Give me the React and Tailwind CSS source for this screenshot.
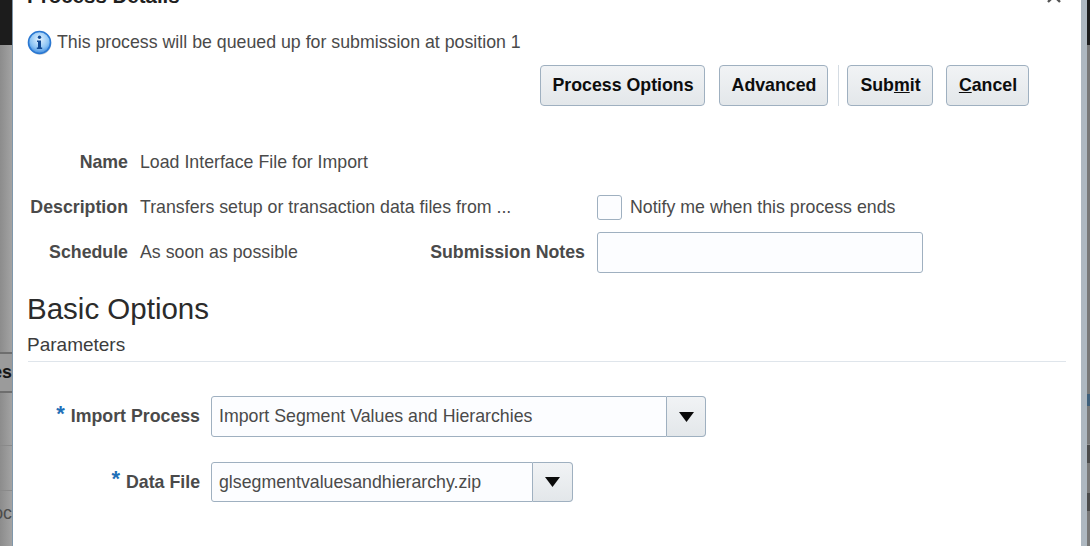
const Btn = ({ className = '', children }) => (
  <button
    type="button"
    className={`h-[41px] rounded-[4px] border border-[#9fb0c0] bg-gradient-to-b from-[#f1f3f5] to-[#e3e7ea] pl-px text-[17.75px] font-bold text-[#0d0d0d] ${className}`}
  >
    {children}
  </button>
);

const DropBtn = ({ className = 'h-[41px] w-[40px]' }) => (
  <button
    type="button"
    className={`flex items-center justify-center rounded-r-[4px] border border-l-0 border-[#9fb0c0] bg-gradient-to-b from-[#f1f3f5] to-[#e3e7ea] ${className}`}
  >
    <svg width="15" height="10" viewBox="0 0 15 10">
      <path d="M0 0h15L7.5 10z" fill="#0a0a0a" />
    </svg>
  </button>
);

const InfoIcon = () => (
  <svg width="25" height="25" viewBox="0 0 25 25" className="-ml-px">
    <defs>
      <radialGradient id="infoFill" cx="50%" cy="35%" r="65%">
        <stop offset="0%" stopColor="#e4f3ff" />
        <stop offset="65%" stopColor="#8cc4f4" />
        <stop offset="100%" stopColor="#3f8ade" />
      </radialGradient>
    </defs>
    <circle cx="13" cy="13.5" r="11.2" fill="#c4ccd4" />
    <circle cx="12.5" cy="12.5" r="11" fill="url(#infoFill)" stroke="#2a78d2" strokeWidth="1.6" />
    <circle cx="12.5" cy="7.2" r="1.7" fill="#114a94" />
    <path d="M10 10.5h4v7h1.2v1.5H9.8v-1.5H11v-5.5h-1z" fill="#114a94" />
  </svg>
);

const Label = ({ children }) => (
  <span className="whitespace-nowrap text-right text-[17.75px] font-bold text-[#4a4a4a]">{children}</span>
);

const Value = ({ className = '', children }) => (
  <span className={`whitespace-nowrap text-[17.75px] text-[#4a4a4a] ${className}`}>{children}</span>
);

function LeftStrip() {
  return (
    <div className="flex w-[12px] shrink-0 flex-col overflow-hidden bg-gradient-to-r from-[#8c8c8c] to-[#a3a3a3]">
      <div className="h-[45px] shrink-0 bg-[#1c1c1c]" />
      <div className="h-[307px] shrink-0" />
      <div className="flex h-[41px] shrink-0 items-center justify-end border-y-2 border-[#6e6e6e] bg-[#9b9b9b] text-[17.75px] font-bold text-[#161616]">
        es
      </div>
      <div className="h-[53px] shrink-0 border-b border-[#8a8a8a]" />
      <div className="h-[45px] shrink-0 border-b border-[#8a8a8a]" />
      <div className="flex h-[44px] shrink-0 items-center justify-end whitespace-nowrap text-[17.75px] text-[#4c4c4c]">
        oc
      </div>
    </div>
  );
}

function RightStrip() {
  return (
    <div className="flex w-[3px] shrink-0 flex-col bg-[#777777]">
      <div className="h-[45px] shrink-0 bg-[#1c1c1c]" />
      <div className="h-[349px] shrink-0" />
      <div className="h-[12px] shrink-0 bg-[#3f5f7a]" />
      <div className="h-[39px] shrink-0 border-b border-[#8a8a8a]" />
      <div className="h-[18px] shrink-0 bg-[#4a4a4a]" />
      <div className="h-[30px] shrink-0" />
      <div className="h-[18px] shrink-0 bg-[#4a4a4a]" />
    </div>
  );
}

export default function App() {
  return (
    <div className="flex h-[546px] w-[1090px] overflow-hidden bg-white font-['Liberation_Sans',Arial,sans-serif]">
      <LeftStrip />
      <div className="flex h-full w-[1075px] shrink-0 border-x border-[#7f97ab] border-r-[6px] border-r-[#aeb8c1]">
        <div className="flex min-w-0 flex-1 flex-col overflow-hidden bg-white pl-[15px] pr-[15px]">
          <div className="-mt-[15px] flex h-[22px] shrink-0 items-center justify-between">
            <span className="-ml-px text-[20.5px] font-bold text-[#1f1f1f]">Process Details</span>
            <svg width="20" height="20" viewBox="0 0 20 20" className="mr-[2px]">
              <path d="M4 4l12 12M16 4L4 16" stroke="#555555" strokeWidth="2.4" />
            </svg>
          </div>

          <div className="mt-[22px] flex h-[26px] shrink-0 items-center gap-[5px]">
            <InfoIcon />
            <Value>This process will be queued up for submission at position 1</Value>
          </div>

          <div className="mt-[10px] flex h-[41px] shrink-0 items-start pl-[512px]">
            <Btn className="w-[165px]">Process Options</Btn>
            <Btn className="ml-[14px] w-[109px]">Advanced</Btn>
            <div className="ml-[10px] h-[41px] w-px bg-[#d5dce3]" />
            <Btn className="ml-[8px] w-[86px]">
              Sub<u>m</u>it
            </Btn>
            <Btn className="ml-[13px] w-[83px]">
              <u>C</u>ancel
            </Btn>
          </div>

          <div className="mt-[34px] grid shrink-0 grid-cols-[100px_273px_160px_auto] grid-rows-[45px_45px_45px] items-center gap-x-[12px]">
            <Label>Name</Label>
            <Value>Load Interface File for Import</Value>
            <span />
            <span />

            <Label>Description</Label>
            <Value className="col-span-2">Transfers setup or transaction data files from ...</Value>
            <div className="flex items-center gap-[8px]">
              <span className="h-[25px] w-[25px] rounded-[3px] border border-[#9fb0c0] bg-[#fcfdff]" />
              <Value>Notify me when this process ends</Value>
            </div>

            <Label>Schedule</Label>
            <Value>As soon as possible</Value>
            <Label>Submission Notes</Label>
            <input className="h-[41px] w-[326px] rounded-[3px] border border-[#9fb0c0] bg-[#fcfdff]" />
          </div>

          <h2 className="-ml-px mt-[16px] h-[36px] shrink-0 text-[29.5px] leading-[36px] text-[#2b2b2b]">Basic Options</h2>
          <div className="-ml-px mt-[6px] h-[24px] shrink-0 text-[19px] leading-[24px] text-[#3c3c3c]">Parameters</div>
          <div className="mt-[4px] h-px shrink-0 bg-[#dfe5eb]" />

          <div className="mt-[34px] flex h-[41px] shrink-0 items-center">
            <div className="flex w-[172px] items-center justify-end gap-[6px]">
              <span className="-mt-[6px] text-[22px] leading-none font-bold text-[#1f6fb8]">*</span>
              <Label>Import Process</Label>
            </div>
            <div className="ml-[11px] flex h-[41px] w-[456px] items-center rounded-l-[3px] border border-[#9fb0c0] bg-[#fcfdff] pl-[7px]">
              <Value>Import Segment Values and Hierarchies</Value>
            </div>
            <DropBtn className="h-[41px] w-[39px]" />
          </div>

          <div className="mt-[25px] flex h-[40px] shrink-0 items-center">
            <div className="flex w-[172px] items-center justify-end gap-[6px]">
              <span className="-mt-[6px] text-[22px] leading-none font-bold text-[#1f6fb8]">*</span>
              <Label>Data File</Label>
            </div>
            <div className="ml-[11px] flex h-[40px] w-[322px] items-center rounded-l-[3px] border border-[#9fb0c0] bg-[#fcfdff] pl-[7px]">
              <Value>glsegmentvaluesandhierarchy.zip</Value>
            </div>
            <DropBtn className="h-[40px] w-[40px]" />
          </div>
        </div>
      </div>
      <RightStrip />
    </div>
  );
}
